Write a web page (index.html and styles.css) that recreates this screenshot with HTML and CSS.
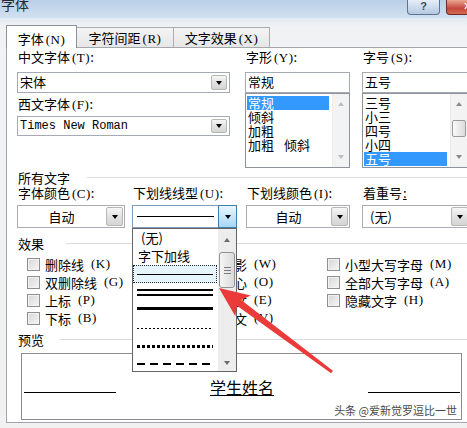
FILE: index.html
```html
<!DOCTYPE html>
<html lang="zh-CN">
<head>
<meta charset="utf-8">
<title>字体</title>
<link rel="stylesheet" href="styles.css">
</head>
<body>
<div class="win">
  <div class="titlebar">
    <div class="title">字体</div>
    <div class="caption">
      <div class="cap-btn help">?</div>
      <div class="cap-btn close">✕</div>
    </div>
  </div>
  <div class="client">
    <div class="tabs">
      <div class="tab active">字体<span class="key">(N)</span></div>
      <div class="tab">字符间距<span class="key">(R)</span></div>
      <div class="tab">文字效果<span class="key">(X)</span></div>
    </div>
    <div class="panel">
      <div class="top-grid">
        <div class="col">
          <div class="label">中文字体<span class="key">(T)</span>:</div>
          <div class="select">
            <span class="val">宋体</span>
            <span class="arrow-btn"><i class="tri"></i></span>
          </div>
          <div class="label l2">西文字体<span class="key">(F)</span>:</div>
          <div class="select s2">
            <span class="val mono">Times New Roman</span>
            <span class="arrow-btn"><i class="tri"></i></span>
          </div>
        </div>
        <div class="col col-style">
          <div class="label">字形<span class="key">(Y)</span>:</div>
          <div class="textbox">常规</div>
          <div class="listbox">
            <div class="items">
              <div class="item sel">常规</div>
              <div class="item">倾斜</div>
              <div class="item">加粗</div>
              <div class="item">加粗<span class="sp"></span>倾斜</div>
            </div>
            <div class="vscroll disabled">
              <div class="sb-btn"><i class="tri-up"></i></div>
              <div class="sb-track"></div>
              <div class="sb-btn"><i class="tri-down"></i></div>
            </div>
          </div>
        </div>
        <div class="col col-size">
          <div class="label">字号<span class="key">(S)</span>:</div>
          <div class="textbox">五号</div>
          <div class="listbox">
            <div class="items">
              <div class="item">三号</div>
              <div class="item">小三</div>
              <div class="item">四号</div>
              <div class="item">小四</div>
              <div class="item sel">五号</div>
            </div>
            <div class="vscroll">
              <div class="sb-btn"><i class="tri-up"></i></div>
              <div class="sb-track"><div class="thumb"></div></div>
              <div class="sb-btn"><i class="tri-down"></i></div>
            </div>
          </div>
        </div>
      </div>

      <div class="group-head g-all"><span>所有文字</span><i class="rule"></i></div>
      <div class="combo-grid">
        <div class="cell">
          <div class="label">字体颜色<span class="key">(C)</span>:</div>
          <div class="combo combo-color">
            <span class="cval center">自动</span>
            <span class="arrow-btn"><i class="tri"></i></span>
          </div>
        </div>
        <div class="cell">
          <div class="label">下划线线型<span class="key">(U)</span>:</div>
          <div class="combo combo-line">
            <span class="cval line-val"><i class="ln ln-single"></i></span>
            <span class="arrow-btn hot"><i class="tri"></i></span>
            <div class="dropdown">
              <div class="dd-items">
                <div class="dd-row text none-item">(无)</div>
                <div class="dd-row text">字下加线</div>
                <div class="dd-row focus"><i class="ln ln-single"></i></div>
                <div class="dd-row"><i class="ln ln-double"></i></div>
                <div class="dd-row"><i class="ln ln-thick"></i></div>
                <div class="dd-row"><i class="ln ln-fine"></i></div>
                <div class="dd-row"><i class="ln ln-dot"></i></div>
                <div class="dd-row"><i class="ln ln-dash"></i></div>
              </div>
              <div class="dd-scroll">
                <div class="dd-up"><i class="tri-up"></i></div>
                <div class="dd-thumb"><i class="grip"></i><i class="grip"></i><i class="grip"></i></div>
                <div class="dd-track"></div>
                <div class="dd-down"><i class="tri-down"></i></div>
              </div>
            </div>
          </div>
        </div>
        <div class="cell">
          <div class="label">下划线颜色<span class="key">(I)</span>:</div>
          <div class="combo combo-ucolor">
            <span class="cval center">自动</span>
            <span class="arrow-btn"><i class="tri"></i></span>
          </div>
        </div>
        <div class="cell">
          <div class="label">着重号<span class="acc">:</span></div>
          <div class="combo combo-emph">
            <span class="cval emph-val">(无)</span>
            <span class="arrow-btn"><i class="tri"></i></span>
          </div>
        </div>
      </div>

      <div class="group-head g-fx"><span>效果</span><i class="rule"></i></div>
      <div class="fx-grid">
        <div class="chk"><i class="box"></i>删除线<span class="key">(K)</span></div>
        <div class="chk"><i class="box"></i>阴影<span class="key">(W)</span></div>
        <div class="chk"><i class="box"></i>小型大写字母<span class="key">(M)</span></div>
        <div class="chk"><i class="box"></i>双删除线<span class="key">(G)</span></div>
        <div class="chk"><i class="box"></i>空心<span class="key">(O)</span></div>
        <div class="chk"><i class="box"></i>全部大写字母<span class="key">(A)</span></div>
        <div class="chk"><i class="box"></i>上标<span class="key">(P)</span></div>
        <div class="chk"><i class="box"></i>阳文<span class="key">(E)</span></div>
        <div class="chk"><i class="box"></i>隐藏文字<span class="key">(H)</span></div>
        <div class="chk"><i class="box"></i>下标<span class="key">(B)</span></div>
        <div class="chk"><i class="box"></i>阴文<span class="key">(V)</span></div>
      </div>

      <div class="group-head g-pv"><span>预览</span><i class="rule"></i></div>
      <div class="preview">
        <i class="pv-line"></i>
        <span class="pv-text">学生姓名</span>
        <i class="pv-line"></i>
        <span class="watermark">头条 @爱新觉罗逗比一世</span>
      </div>
    </div>
  </div>

  <svg class="red-arrow" width="467" height="428" viewBox="0 0 467 428">
    <polygon points="219,288 250.8,295.5 241.2,300.1 332.9,370.8 331.1,373.2 237,305.7 235.3,316.3" fill="#ea3a3a"/>
  </svg>
</div>
</body>
</html>
```

FILE: styles.css
```css
* { box-sizing: border-box; }
html, body { margin: 0; padding: 0; }
body { background: #f0f0f0; }

.win {
  width: 467px;
  height: 428px;
  overflow: hidden;
  position: relative;
  font-family: "Noto Sans CJK SC", "Noto Sans", sans-serif;
  font-size: 13px;
  color: #000;
  background: #f1f1f1;
}

/* title bar */
.titlebar {
  height: 18px;
  display: flex;
  justify-content: space-between;
  align-items: flex-start;
  background: linear-gradient(#b9cfe8, #d2e0f0);
}
.title {
  font-size: 14px;
  line-height: 14px;
  margin: -3px 0 0 1px;
  color: #1f2a36;
}
.caption { display: flex; gap: 6px; margin-right: -22px; }
.cap-btn {
  height: 15px;
  border: 1px solid #5d7390;
  border-top: 0;
  border-radius: 0 0 4px 4px;
  text-align: center;
}
.help {
  width: 33px;
  background: linear-gradient(#e6eef8, #b5c9e2);
  color: #3a4b61;
  font: bold 11px/13px "Liberation Sans", sans-serif;
}
.close {
  width: 43px;
  background: linear-gradient(#e9a793, #c6483c 60%, #d46a55);
  border-color: #6b2a22;
  color: #fff;
  font: bold 11px/13px "DejaVu Sans", sans-serif;
}

/* client area */
.client {
  height: 410px;
  padding: 7px 0 0 6px;
  background: linear-gradient(#e2eaf4 0, #f1f2f4 9px, #f1f1f1);
}
.tabs {
  display: flex;
  align-items: flex-end;
  height: 22px;
  position: relative;
  z-index: 1;
}
.tab {
  height: 20px;
  padding-top: 1px;
  line-height: 18px;
  text-align: center;
  white-space: nowrap;
  border: 1px solid #acacac;
  border-bottom: 0;
  background: linear-gradient(#f4f4f4, #e6e6e6);
  width: 98px;
  margin-left: -1px;
}
.tab:nth-child(3) { width: 97px; }
.tab.active {
  width: 71px;
  margin-left: 0;
  height: 23px;
  margin-bottom: -1px;
  padding-top: 4px;
  background: #fff;
  border-color: #8d9199;
  position: relative;
  z-index: 2;
}

.panel {
  position: relative;
  width: 470px;
  height: 376px;
  background: #fff;
  border: 1px solid #a3a6ab;
  border-right: 0;
  padding: 2px 0 0 10px;
}

.label {
  height: 14px;
  line-height: 14px;
  padding-left: 1px;
  white-space: nowrap;
}
.key {
  font-family: "Liberation Serif", serif;
  margin-left: 2px;
  letter-spacing: 0.5px;
}
.acc { text-decoration: underline; margin-left: 1px; }

/* top section */
.top-grid { display: grid; grid-template-columns: 228px 117px 106px; }
.select {
  display: flex;
  width: 213px;
  height: 21px;
  margin-top: 8px;
  border: 1px solid #a6abb3;
  background: #fff;
}
.select.s2 { height: 20px; margin-top: 5px; }
.l2 { margin-top: 4px; }
.val { flex: 1; line-height: 18px; padding-left: 2px; white-space: nowrap; }
.mono { font-family: "Liberation Mono", monospace; font-size: 12px; }

.arrow-btn {
  width: 16px;
  margin: 2px 2px 2px 0;
  border: 1px solid #b6b6b6;
  border-radius: 2px;
  background: linear-gradient(#f7f7f7, #e2e2e2 50%, #d4d4d4);
  display: flex;
  align-items: center;
  justify-content: center;
  flex: none;
}
.tri {
  width: 0; height: 0;
  border-left: 3.5px solid transparent;
  border-right: 3.5px solid transparent;
  border-top: 4px solid #000;
}
.tri-up, .tri-down {
  width: 0; height: 0;
  border-left: 3.5px solid transparent;
  border-right: 3.5px solid transparent;
}
.tri-up { border-bottom: 4px solid #8a8a8a; }
.tri-down { border-top: 4px solid #8a8a8a; }

.col-style .textbox, .col-style .listbox { width: 105px; }
.textbox {
  height: 21px;
  margin-top: 8px;
  border: 1px solid #a6abb3;
  line-height: 18px;
  padding-left: 2px;
  white-space: nowrap;
}
.listbox {
  display: flex;
  height: 75px;
  border: 1px solid #8e939a;
}
.items { flex: 1; padding: 2px 3px 0 1px; }
.item { height: 14px; line-height: 14px; padding-left: 1px; white-space: nowrap; }
.item.sel { background: #3399ff; color: #fff; }
.sp { display: inline-block; width: 10px; }

.vscroll {
  width: 17px;
  display: flex;
  flex-direction: column;
  background: #f3f3f3;
  border-left: 1px solid #ebebeb;
  flex: none;
}
.sb-btn { height: 20px; display: flex; align-items: center; justify-content: center; }
.sb-track { flex: 1; }
.disabled .tri-up { border-bottom-color: #bdbdbd; }
.disabled .tri-down { border-top-color: #bdbdbd; }
.thumb {
  margin: 6px 1px 0 1px;
  height: 17px;
  border: 1px solid #9b9b9b;
  border-radius: 2px;
  background: linear-gradient(90deg, #fafafa, #dcdcdc);
}

/* group heads */
.group-head {
  display: flex;
  align-items: center;
  height: 14px;
  line-height: 14px;
  padding-left: 1px;
  white-space: nowrap;
}
.rule {
  flex: 1;
  height: 2px;
  border-top: 1px solid #d9dce0;
  border-bottom: 1px solid #fff;
  margin-left: 17px;
}
.g-all { margin-top: 3px; }
.g-fx { margin-top: 9px; }
.g-fx .rule { margin-left: 22px; }
.g-pv { margin-top: 6px; }
.g-pv .rule { margin-left: 15px; }

/* combo row */
.combo-grid {
  display: grid;
  grid-template-columns: 115px 114px 116px 110px;
  margin-top: 1px;
}
.combo {
  position: relative;
  display: flex;
  height: 23px;
  margin-top: 5px;
  border: 1px solid #a9adb3;
  background: #fff;
}
.combo-color { width: 108px; }
.combo-line { width: 105px; border-color: #7f9db9; }
.combo-ucolor { width: 104px; }
.combo-emph { width: 108px; }
.cval { flex: 1; line-height: 21px; white-space: nowrap; }
.cval.center { text-align: center; }
.emph-val { padding-left: 7px; }
.line-val { display: flex; align-items: center; padding: 0 4px; }
.combo .arrow-btn { width: 17px; margin: 1px; }
.combo .arrow-btn.hot {
  margin: -1px -1px -1px 0;
  width: 19px;
  border-color: #3c7fb1;
  border-radius: 0;
  background: linear-gradient(#eaf6fd, #c6e7fb 50%, #a6d7f4);
}

/* underline line samples */
.ln { flex: 1; display: block; }
.ln-single { height: 1px; background: #000; }
.ln-double { height: 7px; border-top: 2px solid #000; border-bottom: 2px solid #000; }
.ln-thick { height: 3px; background: #000; margin-bottom: 4px; }
.ln-fine { height: 1px; background: repeating-linear-gradient(90deg, #000 0 2px, transparent 2px 4px); }
.ln-dot { height: 3px; background: repeating-linear-gradient(90deg, #000 0 3px, transparent 3px 5px); }
.ln-dash { height: 2px; background: repeating-linear-gradient(90deg, #000 0 8px, transparent 8px 13px); }

/* dropdown list */
.dropdown {
  position: absolute;
  z-index: 5;
  top: 22px;
  left: -1px;
  width: 105px;
  height: 144px;
  border: 1px solid #646464;
  background: #fff;
  display: flex;
}
.dd-items { width: 84px; display: flex; flex-direction: column; }
.dd-row {
  height: 18px;
  display: flex;
  align-items: center;
  padding: 0 4px;
  white-space: nowrap;
  flex: none;
}
.dd-row.text { padding-left: 5px; line-height: 18px; }
.dd-row.none-item { padding-left: 8px; }
.dd-row.focus {
  background: #e6f4fc;
  border: 1px dotted #1a2a3a;
  padding: 0 3px;
}
.dd-scroll {
  width: 18px;
  margin-left: 1px;
  background: #ededed;
  display: flex;
  flex-direction: column;
}
.dd-up { height: 22px; display: flex; align-items: center; justify-content: center; }
.dd-down { height: 17px; display: flex; align-items: center; justify-content: center; }
.dd-up .tri-up { border-bottom-color: #6a6a6a; }
.dd-down .tri-down { border-top-color: #6a6a6a; }
.dd-thumb {
  height: 36px;
  margin: 1px 1px 0 1px;
  border: 1px solid #929292;
  border-radius: 3px;
  background: linear-gradient(90deg, #f6f6f6, #dadada);
  display: flex;
  flex-direction: column;
  align-items: center;
  justify-content: center;
  gap: 2px;
}
.grip { display: block; width: 7px; height: 1px; background: #7a7a7a; }
.dd-track { flex: 1; }

/* effects */
.fx-grid {
  display: grid;
  grid-template-columns: 176px 124px 1fr;
  grid-auto-rows: 18px;
  margin: 4px 0 0 10px;
}
.chk { display: flex; align-items: center; gap: 5px; white-space: nowrap; }
.box {
  flex: none;
  width: 13px;
  height: 13px;
  border: 1px solid #8e8f8f;
  background: linear-gradient(135deg, #d6d6d6, #f6f6f6);
  box-shadow: inset 0 0 0 1px #f2f2f2;
}

/* preview */
.preview {
  position: relative;
  margin: 6px 0 0 4px;
  width: 441px;
  height: 67px;
  border: 1px solid #8c8c8c;
  display: flex;
  justify-content: space-between;
  align-items: flex-start;
  padding: 23px 1px 0 2px;
}
.pv-line { display: block; width: 92px; height: 1px; background: #000; margin-top: 15px; }
.pv-text {
  font-size: 16px;
  line-height: 20px;
  text-decoration: underline;
  text-underline-offset: 1px;
  white-space: nowrap;
}
.watermark {
  position: absolute;
  right: 4px;
  bottom: 2px;
  font-size: 11px;
  line-height: 13px;
  color: #4a4a4a;
  white-space: nowrap;
  text-shadow: 0 0 2px #fff;
}

.red-arrow {
  position: absolute;
  left: 0;
  top: 0;
  z-index: 10;
  pointer-events: none;
}
```
